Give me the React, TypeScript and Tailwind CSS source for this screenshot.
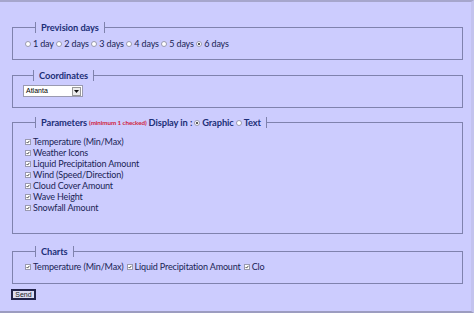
const font = { fontFamily: "Lato, 'Open Sans', sans-serif" };

const Radio = ({ checked = false }: { checked?: boolean }) => (
  <span className="inline-flex h-[6px] w-[6px] shrink-0 items-center justify-center rounded-full border border-[#9a9ab0] bg-white">
    {checked && <span className="h-[2px] w-[2px] rounded-full bg-[#222]" />}
  </span>
);

const Check = () => (
  <span className="inline-flex h-[6px] w-[6px] shrink-0 items-center justify-center border border-[#9a9ab0] bg-white">
    <svg viewBox="0 0 6 6" className="h-[4px] w-[4px]">
      <path d="M0.8 3 L2.4 4.6 L5.2 1.2" stroke="#222" strokeWidth="1.2" fill="none" />
    </svg>
  </span>
);

const Legend = ({ children }: { children: React.ReactNode }) => (
  <legend className="ml-[10px] flex h-[11px] items-center gap-[2px] border-x border-[#7f82ad] px-[5px] text-[9.3px] font-bold leading-[11px] tracking-[-0.1px] text-[#1c2f78]">
    {children}
  </legend>
);

const days = ["1 day", "2 days", "3 days", "4 days", "5 days", "6 days"];
const params = [
  "Temperature (Min/Max)",
  "Weather Icons",
  "Liquid Precipitation Amount",
  "Wind (Speed/Direction)",
  "Cloud Cover Amount",
  "Wave Height",
  "Snowfall Amount",
];

export default function App() {
  return (
    <div
      className="h-[313px] w-[474px] overflow-hidden border-t-2 border-r-[3px] border-b-2 border-t-[#a6a6cc] border-r-[#c3c3ee] border-b-[#9c9cc0] bg-[#ccccfe] text-[#1a1f55]"
      style={font}
    >
      {/* Prevision days */}
      <fieldset className="ml-[12px] mt-[20px] h-[38px] w-[451px] border border-[#7f82ad] pl-[12px]">
        <Legend>Prevision days</Legend>
        <div className="mt-[5px] flex h-[12px] items-center text-[9px] tracking-[-0.15px]">
          {days.map((d, i) => (
            <span key={d} className="mr-[2.5px] flex items-center gap-[2px]">
              <Radio checked={i === 5} />
              {d}
            </span>
          ))}
        </div>
      </fieldset>

      {/* Coordinates */}
      <fieldset className="ml-[12px] mt-[10px] h-[38px] w-[451px] border border-[#7f82ad] pl-[10px]">
        <Legend>Coordinates</Legend>
        <div className="mt-[4px] flex h-[12px] w-[60px] items-center justify-between border border-[#9a9ab0] bg-white pl-[2px] pr-[1px]">
          <span className="text-[7px] text-black" style={{ fontFamily: "'Liberation Sans', Arial, sans-serif" }}>
            Atlanta
          </span>
          <span className="flex h-[9px] w-[9px] items-center justify-center border border-[#999] bg-[#ececec]">
            <svg viewBox="0 0 5 3" className="h-[3px] w-[5px]">
              <path d="M0 0 L5 0 L2.5 3 Z" fill="#111" />
            </svg>
          </span>
        </div>
      </fieldset>

      {/* Parameters */}
      <fieldset className="ml-[12px] mt-[9px] h-[117px] w-[451px] border border-[#7f82ad] pl-[12px]">
        <Legend>
          Parameters
          <span className="text-[6.3px] text-[#d0223a]">(minimum 1 checked)</span>
          Display in :
          <Radio checked />
          Graphic
          <Radio />
          Text
        </Legend>
        <div className="mt-[8px] flex flex-col text-[9px] leading-[11px] tracking-[-0.15px]">
          {params.map((p) => (
            <span key={p} className="flex items-center gap-[2px]">
              <Check />
              {p}
            </span>
          ))}
        </div>
      </fieldset>

      {/* Charts */}
      <fieldset className="ml-[12px] mt-[12px] h-[38px] w-[451px] border border-[#7f82ad] pl-[12px]">
        <Legend>Charts</Legend>
        <div className="mt-[4px] flex h-[12px] items-center text-[9px] tracking-[-0.15px]">
          <span className="mr-[3px] flex items-center gap-[2px]">
            <Check />
            Temperature (Min/Max)
          </span>
          <span className="mr-[3px] flex items-center gap-[2px]">
            <Check />
            Liquid Precipitation Amount
          </span>
          <span className="flex items-center gap-[2px]">
            <Check />
            Clo
          </span>
        </div>
      </fieldset>

      <button
        className="ml-[11px] mt-[5px] flex h-[11px] w-[25px] items-center justify-center border-2 border-[#23244a] bg-[#dedef2] text-[7px] leading-none text-[#222]"
        style={{ fontFamily: "'Liberation Sans', Arial, sans-serif" }}
      >
        Send
      </button>
    </div>
  );
}
